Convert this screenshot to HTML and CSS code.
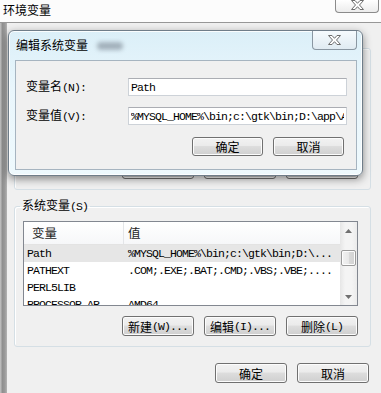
FILE: index.html
```html
<!DOCTYPE html>
<html lang="zh-CN">
<head>
  <meta charset="UTF-8">
  <title>环境变量</title>
  <link rel="stylesheet" href="styles.css">
</head>
<body>
  <div class="env-window">
    <div class="titlebar">
      <span class="win-title">环境变量</span>
      <span class="close-btn main-close">
        <svg width="13" height="10" viewBox="0 0 13 10"><polygon class="x-mark" points="0.5,0.5 4,0.5 6.5,3.3 9,0.5 12.5,0.5 8.5,5 12.5,9.5 9,9.5 6.5,6.7 4,9.5 0.5,9.5 4.5,5"/></svg>
      </span>
    </div>

    <div class="frame">
      <div class="frame-edge"></div>
      <div class="client">
        <!-- 用户变量: 被编辑对话框挡住, 只露出按钮底边 -->
        <fieldset class="group user-group">
          <div class="var-list user-list"></div>
          <div class="btn-row">
            <button class="btn"></button>
            <button class="btn"></button>
            <button class="btn"></button>
          </div>
        </fieldset>

        <fieldset class="group sys-group">
          <legend>系统变量<span class="k">(S)</span></legend>
          <div class="var-list">
            <div class="list-body">
              <div class="list-head">
                <span class="col-name">变量</span>
                <span class="col-val">值</span>
              </div>
              <div class="list-row selected"><span class="col-name">Path</span><span class="col-val">%MYSQL_HOME%\bin;c:\gtk\bin;D:\...</span></div>
              <div class="list-row"><span class="col-name">PATHEXT</span><span class="col-val">.COM;.EXE;.BAT;.CMD;.VBS;.VBE;....</span></div>
              <div class="list-row"><span class="col-name">PERL5LIB</span><span class="col-val"></span></div>
              <div class="list-row"><span class="col-name">PROCESSOR_AR</span><span class="col-val">AMD64</span></div>
            </div>
            <div class="scrollbar">
              <div class="sb-arrow"><svg width="7" height="4" viewBox="0 0 7 4"><polygon points="0,4 3.5,0 7,4"/></svg></div>
              <div class="sb-track"><div class="sb-thumb"></div></div>
              <div class="sb-arrow"><svg width="7" height="4" viewBox="0 0 7 4"><polygon points="0,0 3.5,4 7,0"/></svg></div>
            </div>
          </div>
          <div class="btn-row">
            <button class="btn">新建<span class="k">(W)...</span></button>
            <button class="btn">编辑<span class="k">(I)...</span></button>
            <button class="btn">删除<span class="k">(L)</span></button>
          </div>
        </fieldset>

        <div class="btn-row footer">
          <button class="btn">确定</button>
          <button class="btn">取消</button>
        </div>
      </div>
    </div>

    <!-- 编辑系统变量 对话框 -->
    <div class="dialog">
      <div class="dlg-title">
        <span class="dlg-caption">编辑系统变量</span>
        <span class="dlg-glow"></span>
        <span class="close-btn dlg-close">
          <svg width="13" height="10" viewBox="0 0 13 10"><polygon class="x-mark" points="0.5,0.5 4,0.5 6.5,3.3 9,0.5 12.5,0.5 8.5,5 12.5,9.5 9,9.5 6.5,6.7 4,9.5 0.5,9.5 4.5,5"/></svg>
        </span>
      </div>
      <div class="dlg-client">
        <div class="field-grid">
          <label for="varName">变量名<span class="k">(N):</span></label>
          <input id="varName" type="text" value="Path">
          <label for="varValue">变量值<span class="k">(V):</span></label>
          <input id="varValue" type="text" value="%MYSQL_HOME%\bin;c:\gtk\bin;D:\app\Administrator\product\11.2.0\dbhome_1\bin;%SystemRoot%\system32">
        </div>
        <div class="btn-row dlg-buttons">
          <button class="btn">确定</button>
          <button class="btn">取消</button>
        </div>
      </div>
    </div>
  </div>
</body>
</html>
```

FILE: styles.css
```css
* {
  box-sizing: border-box;
}

body {
  margin: 0;
  font-family: "Noto Sans CJK SC", sans-serif;
  font-size: 12px;
  color: #000;
  background: #f0f0f0;
}

.k,
.list-row,
input {
  font-family: "Liberation Mono", "DejaVu Sans Mono", monospace;
  font-size: 11.5px;
  letter-spacing: -0.9px;
}

.env-window {
  position: relative;
  width: 381px;
  height: 393px;
  overflow: hidden;
  display: flex;
  flex-direction: column;
}

/* 标题栏 */
.titlebar {
  height: 23px;
  display: flex;
  align-items: flex-start;
  background: #fcfcfc;
  border-bottom: 1px solid #979797;
}

.win-title {
  padding-left: 3px;
  line-height: 19px;
}

.close-btn {
  display: flex;
  align-items: center;
  justify-content: center;
  border: 1px solid #8b8b8b;
  border-top: none;
  border-radius: 0 0 4px 4px;
}

.main-close {
  margin-left: auto;
  margin-right: 2px;
  width: 44px;
  height: 13px;
  padding-bottom: 2px;
  background: linear-gradient(#ffffff, #ececec);
}

.x-mark {
  fill: #fff;
  stroke: #6e6e6e;
  stroke-width: 1;
}

.frame {
  flex: 1;
  display: flex;
}

.frame-edge {
  width: 7px;
  background: linear-gradient(to right, #c6c6c6, #8f8f8f 35%, #9a9a9a 70%, #b4b4b4);
}

.client {
  flex: 1;
  padding-left: 7px;
  background: #f0f0f0;
}

/* 分组框 */
.group {
  margin: 0;
  min-width: 0;
  width: 357px;
  padding: 7px 12px 10px 8px;
  border: 1px solid #d5dfe5;
  border-radius: 3px;
  box-shadow: inset 1px 1px 0 #fff;
}

.group legend {
  padding: 0 2px;
  margin-left: -3px;
  line-height: 14px;
}

.user-group {
  margin-top: 25px;
  padding-top: 13px;
}

.sys-group {
  margin-top: 8px;
}

/* 列表 */
.var-list {
  height: 85px;
  display: flex;
  border: 1px solid #828790;
  background: #fff;
}

.user-list {
  height: 87px;
}

.list-body {
  flex: 1;
  overflow: hidden;
}

.list-head {
  display: flex;
  height: 23px;
  line-height: 22px;
  font-size: 12.5px;
  color: #1e1e1e;
  border-bottom: 1px solid #e3e3e3;
  background: linear-gradient(#ffffff, #f6f7f9);
}

.list-head .col-name {
  width: 100px;
  padding-left: 8px;
  border-right: 1px solid #e3e5e8;
}

.list-head .col-val {
  padding-left: 4px;
}

.list-row {
  display: flex;
  height: 17px;
  line-height: 17px;
  white-space: nowrap;
}

.list-row .col-name {
  width: 100px;
  padding-left: 3px;
}

.list-row .col-val {
  padding-left: 4px;
}

.list-row.selected {
  background: #e6e6e6;
}

.scrollbar {
  width: 17px;
  display: flex;
  flex-direction: column;
  background: linear-gradient(to right, #e6e6e6, #f4f4f4 30%, #f4f4f4 70%, #ebebeb);
}

.sb-arrow {
  height: 17px;
  display: flex;
  align-items: center;
  justify-content: center;
}

.sb-arrow polygon {
  fill: #707070;
}

.sb-track {
  flex: 1;
  padding: 11px 1px 0;
}

.sb-thumb {
  height: 16px;
  border: 1px solid #9b9b9b;
  border-radius: 2px;
  background: linear-gradient(to right, #f3f3f3, #e8e8e8 50%, #dadada 51%, #d2d2d2);
  box-shadow: inset 0 0 0 1px #fdfdfd;
}

/* 按钮 */
.btn-row {
  display: flex;
  justify-content: flex-end;
  gap: 10px;
  margin-top: 10px;
}

.footer {
  width: 357px;
  margin-top: 16px;
  padding-right: 2px;
}

.btn {
  width: 72px;
  height: 20px;
  padding: 0;
  display: flex;
  align-items: center;
  justify-content: center;
  font-family: "Noto Sans CJK SC", sans-serif;
  font-size: 12px;
  color: #000;
  border: 1px solid #707070;
  border-radius: 3px;
  background: linear-gradient(#f2f2f2 0%, #ebebeb 45%, #dddddd 50%, #cfcfcf 100%);
  box-shadow: inset 0 0 0 1px #fcfcfc;
}

/* 编辑对话框 */
.dialog {
  position: absolute;
  left: 8px;
  top: 30px;
  width: 355px;
  height: 146px;
  display: flex;
  flex-direction: column;
  border: 1px solid #6f7d89;
  border-radius: 6px;
  background: linear-gradient(#dbeff8, #e9f6fc 40%, #eef9fd);
  box-shadow: 0 3px 8px rgba(0, 0, 0, 0.45), inset 0 0 0 1px rgba(255, 255, 255, 0.85);
}

.dlg-title {
  height: 29px;
  display: flex;
  align-items: flex-start;
  padding: 0 5px 0 7px;
}

.dlg-caption {
  line-height: 28px;
}

.dlg-glow {
  width: 26px;
  height: 8px;
  margin: 11px 0 0 9px;
  border-radius: 4px;
  background: rgba(90, 100, 112, 0.45);
  filter: blur(2px);
}

.dlg-close {
  margin-left: auto;
  width: 45px;
  height: 19px;
  border-color: #8a97a2;
  background: linear-gradient(#f6fbfe, #e0ebf2);
}

.dlg-client {
  flex: 1;
  margin: 0 5px 5px 6px;
  padding: 17px 9px 0 10px;
  border: 1px solid #a6b4c0;
  background: #f0f0f0;
}

.field-grid {
  display: grid;
  grid-template-columns: 102px 219px;
  grid-auto-rows: 18px;
  row-gap: 11px;
  align-items: center;
}

.field-grid label {
  line-height: 18px;
}

.field-grid input {
  width: 100%;
  height: 18px;
  margin: 0;
  padding: 0 2px;
  color: #000;
  background: #fff;
  border: 1px solid #cdd2d8;
  border-top-color: #abadb3;
  outline: none;
}

.dlg-buttons {
  margin-top: 12px;
  margin-right: 3px;
}

.dlg-buttons .btn {
  width: 71px;
  height: 19px;
}
```
